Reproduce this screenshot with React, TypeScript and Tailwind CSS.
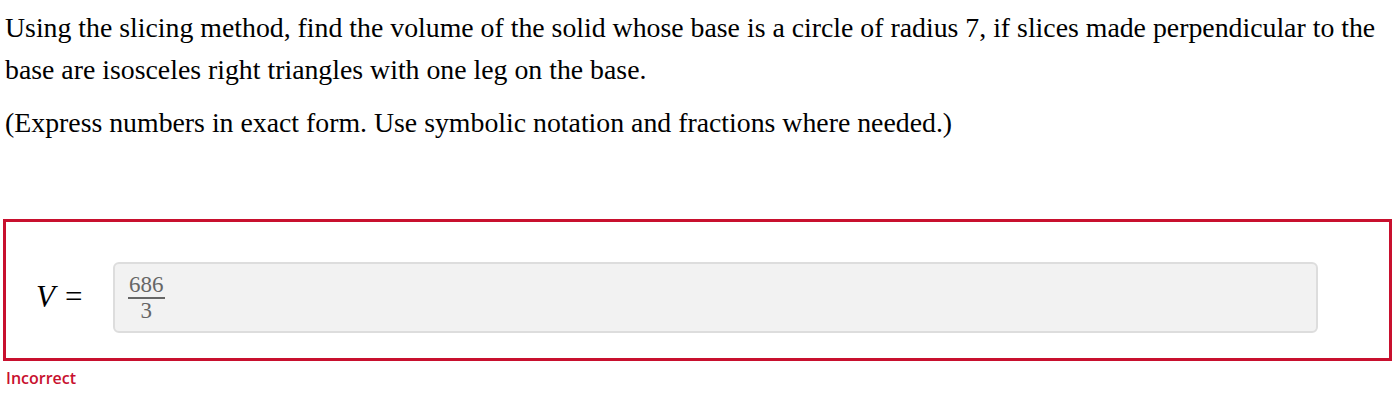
import React from "react";

export default function App() {
  return (
    <div className="w-[1396px] h-[404px] bg-white text-black">
      <div className="pl-[5px] pr-2 pt-[7px] font-['Liberation_Serif',serif] text-[27.8px] leading-[42px]">
        <p>
          Using the slicing method, find the volume of the solid whose base is a circle of radius 7, if slices made
          perpendicular to the base are isosceles right triangles with one leg on the base.
        </p>
        <p className="mt-[11px]">(Express numbers in exact form. Use symbolic notation and fractions where needed.)</p>
      </div>

      <div className="mt-[75px] ml-[3px] w-[1389px] h-[142px] border-[3px] border-[#c8102e] flex items-start pt-[40px]">
        <div className="w-[107px] h-[71px] pl-[30px] flex items-center gap-[10px] font-['Liberation_Serif',serif] text-[31px]">
          <span className="italic">V</span>
          <span>=</span>
        </div>
        <div className="w-[1205px] h-[71px] rounded-[6px] border-2 border-[#dddddd] bg-[#f2f2f2] flex items-center pl-[13px]">
          <div className="inline-flex flex-col items-center font-['Liberation_Serif',serif] text-[23px] leading-[22px] text-[#666666]">
            <span className="px-[1px]">686</span>
            <span className="block w-full h-[2px] bg-[#666666] my-[1px]"></span>
            <span>3</span>
          </div>
        </div>
      </div>

      <div className="pl-[6px] mt-[5px] font-['Open_Sans',sans-serif] font-semibold text-[16px] text-[#c8102e]">
        Incorrect
      </div>
    </div>
  );
}
